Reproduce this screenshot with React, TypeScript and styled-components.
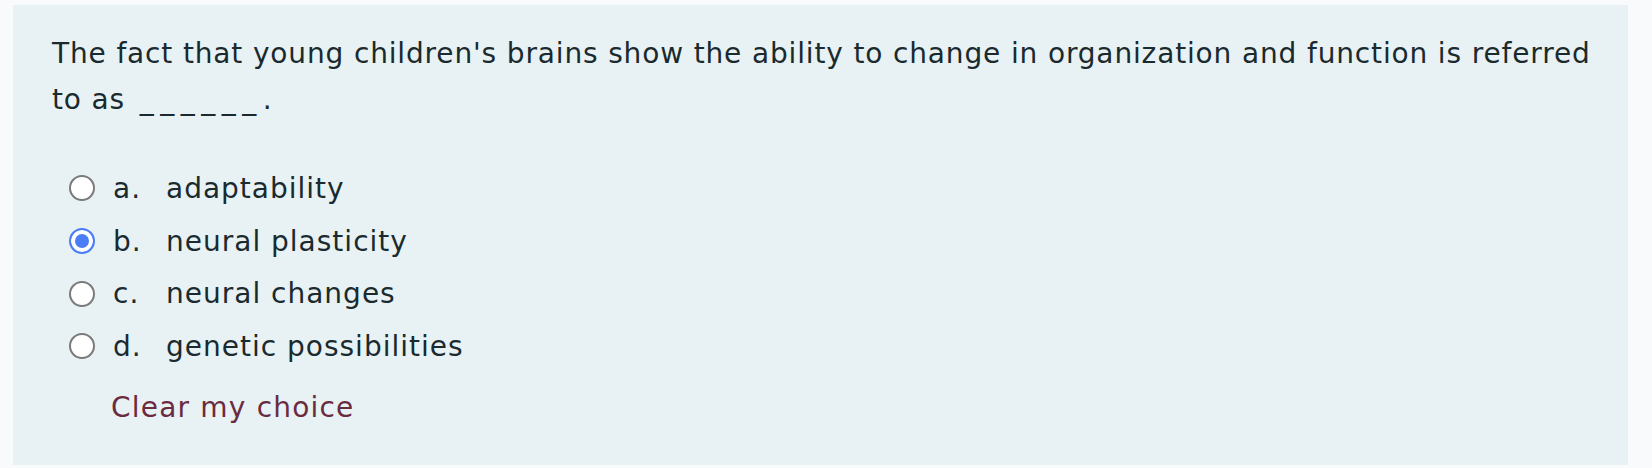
import React, { useState } from 'react';
import styled, { createGlobalStyle } from 'styled-components';

const GlobalStyle = createGlobalStyle`
  html, body {
    margin: 0;
    padding: 0;
    background: #f8fafc;
  }
  body {
    font-family: "DejaVu Sans", "Open Sans", sans-serif;
    color: #1a2a2e;
  }
`;

const Page = styled.div`
  padding: 5px 24px 3px 13px;
  height: 468px;
  box-sizing: border-box;
`;

const Formulation = styled.div`
  background: #e8f2f4;
  height: 100%;
  box-sizing: border-box;
  padding: 26px 10px 0 39px;
`;

const QuestionText = styled.p`
  margin: 0 0 39px;
  font-size: 28px;
  line-height: 46px;
  letter-spacing: 0.85px;
`;

const Blank = styled.span`
  display: inline-block;
  letter-spacing: 6.5px;
  margin: 0 0 0 5px;
`;

const Answers = styled.div`
  display: flex;
  flex-direction: column;
  padding-left: 17px;
`;

const AnswerRow = styled.label`
  display: flex;
  align-items: center;
  height: 52.7px;
  font-size: 28px;
  letter-spacing: 1px;
  cursor: pointer;
`;

const Radio = styled.input`
  appearance: none;
  margin: 0 18px 0 0;
  width: 26px;
  height: 26px;
  box-sizing: border-box;
  border-radius: 50%;
  border: 2px solid #7a7a7a;
  background: #fff;
  flex-shrink: 0;

  &:checked {
    border-color: #4b7ef6;
    background: #4b7ef6;
    box-shadow: inset 0 0 0 4px #fff;
  }
`;

const Letter = styled.span`
  width: 53px;
  flex-shrink: 0;
`;

const ClearLink = styled.a`
  display: block;
  margin: 13px 0 0 59px;
  font-size: 28px;
  line-height: 44px;
  letter-spacing: 1.2px;
  color: #6b2b3f;
  text-decoration: none;
  cursor: pointer;
`;

const options = [
  { key: 'a', text: 'adaptability' },
  { key: 'b', text: 'neural plasticity' },
  { key: 'c', text: 'neural changes' },
  { key: 'd', text: 'genetic possibilities' },
];

const App: React.FC = () => {
  const [choice, setChoice] = useState<string | null>('b');

  return (
    <>
      <GlobalStyle />
      <Page>
        <Formulation>
          <QuestionText>
            The fact that young children's brains show the ability to change in organization and function is referred
            to as <Blank>______</Blank>.
          </QuestionText>
          <Answers>
            {options.map(o => (
              <AnswerRow key={o.key}>
                <Radio
                  type="radio"
                  name="q1"
                  checked={choice === o.key}
                  onChange={() => setChoice(o.key)}
                />
                <Letter>{o.key}.</Letter>
                {o.text}
              </AnswerRow>
            ))}
          </Answers>
          <ClearLink onClick={() => setChoice(null)}>Clear my choice</ClearLink>
        </Formulation>
      </Page>
    </>
  );
};

export default App;
